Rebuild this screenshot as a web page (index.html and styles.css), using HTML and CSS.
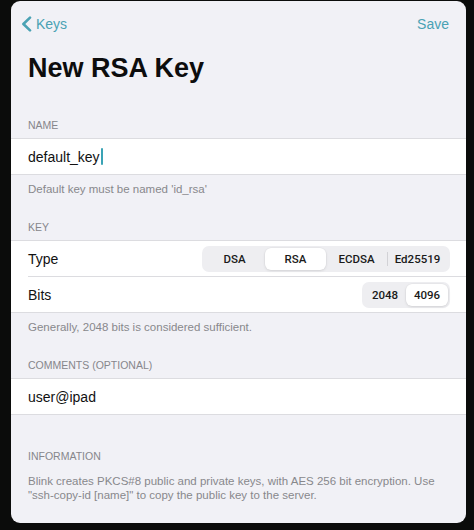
FILE: index.html
```html
<!DOCTYPE html>
<html lang="en">
<head>
<meta charset="utf-8">
<title>New RSA Key</title>
<link rel="stylesheet" href="styles.css">
</head>
<body>
<div class="panel">
  <div class="nav">
    <div class="back">
      <svg class="chev" width="11" height="16" viewBox="0 0 11 16"><path d="M9 1.6 L2.4 8 L9 14.4" fill="none" stroke="#4aa2b4" stroke-width="2.6" stroke-linecap="round" stroke-linejoin="round"/></svg>
      <span>Keys</span>
    </div>
    <span class="save">Save</span>
  </div>
  <h1 class="title">New RSA Key</h1>

  <div class="section-header first">NAME</div>
  <div class="group">
    <div class="row"><span class="value">default_key</span><span class="caret"></span></div>
  </div>
  <div class="footer">Default key must be named 'id_rsa'</div>

  <div class="section-header">KEY</div>
  <div class="group">
    <div class="row">
      <span class="label">Type</span>
      <div class="seg">
        <span class="seg-item">DSA</span>
        <span class="seg-item selected">RSA</span>
        <span class="seg-item">ECDSA</span>
        <span class="seg-divider"></span>
        <span class="seg-item">Ed25519</span>
      </div>
    </div>
    <div class="sep"></div>
    <div class="row">
      <span class="label">Bits</span>
      <div class="seg">
        <span class="seg-item narrow">2048</span>
        <span class="seg-item narrow selected">4096</span>
      </div>
    </div>
  </div>
  <div class="footer">Generally, 2048 bits is considered sufficient.</div>

  <div class="section-header">COMMENTS (OPTIONAL)</div>
  <div class="group">
    <div class="row"><span class="value">user@ipad</span></div>
  </div>

  <div class="section-header info">INFORMATION</div>
  <div class="footer info-text">Blink creates PKCS#8 public and private keys, with AES 256 bit encryption. Use "ssh-copy-id [name]" to copy the public key to the server.</div>
</div>
</body>
</html>
```

FILE: styles.css
```css
* { box-sizing: border-box; }
html, body {
  margin: 0;
  padding: 0;
  background: #0b0c0b;
  height: 530px;
  overflow: hidden;
}
body {
  font-family: "Liberation Sans", Arial, sans-serif;
  color: #111;
}
.panel {
  margin: 1px 8px 0 11px;
  height: 522px;
  background: #f1f1f6;
  border-radius: 9px;
  overflow: hidden;
  display: flex;
  flex-direction: column;
}
.nav {
  display: flex;
  justify-content: space-between;
  align-items: center;
  padding: 15px 17px 0 10px;
  height: 31px;
  font-size: 14px;
  line-height: 16px;
  color: #4aa2b4;
}
.back {
  display: flex;
  align-items: center;
  gap: 4px;
}
.chev { display: block; }
.title {
  margin: 20px 0 0 17px;
  font-size: 27px;
  line-height: 32px;
  font-weight: 700;
  color: #0d0d0d;
}
.section-header {
  margin: 25px 0 6px 17px;
  font-size: 10.5px;
  line-height: 13px;
  color: #86868b;
}
.section-header.first { margin-top: 35px; }
.section-header.info { margin-top: 35px; margin-bottom: 0; }
.group {
  background: #fff;
  border-top: 1px solid #dcdce0;
  border-bottom: 1px solid #dcdce0;
}
.row {
  height: 35px;
  display: flex;
  align-items: center;
  padding: 0 16px 0 17px;
  font-size: 14px;
  line-height: 16px;
}
.label { flex: 1; }
.caret {
  width: 2px;
  height: 17px;
  margin-left: 1px;
  background: #3aa3b5;
  border-radius: 1px;
}
.sep {
  height: 1px;
  margin-left: 17px;
  background: #dcdce0;
}
.footer {
  padding: 7px 16px 0 17px;
  font-size: 11.5px;
  line-height: 14px;
  color: #88888c;
}
.info-text { padding-top: 11px; }
.seg {
  display: flex;
  align-items: center;
  padding: 2px;
  height: 26px;
  background: #eeeef1;
  border-radius: 7px;
}
.seg-item {
  width: 61px;
  height: 22px;
  display: flex;
  align-items: center;
  justify-content: center;
  font-family: Roboto, "Liberation Sans", sans-serif;
  font-size: 11.5px;
  font-weight: 500;
  color: #1a1a1a;
  border-radius: 6px;
}
.seg-item.narrow { width: 42px; }
.seg-item.selected {
  background: #fff;
  box-shadow: 0 1px 3px rgba(0,0,0,0.10), 0 0 0 0.5px rgba(0,0,0,0.04);
}
.seg-divider {
  width: 1px;
  height: 14px;
  margin: 0 -0.5px;
  background: #d2d2d6;
}
```
